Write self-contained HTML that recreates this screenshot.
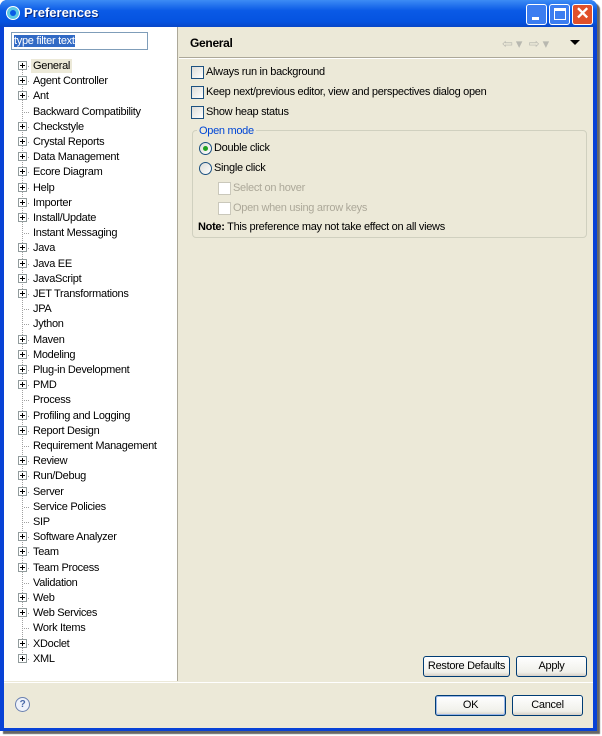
<!DOCTYPE html>
<html><head><style>
*{box-sizing:border-box;margin:0;padding:0}
body{width:602px;height:736px;background:#fff;font-family:"Liberation Sans",sans-serif;font-size:11px;letter-spacing:-0.3px;position:relative;overflow:hidden}
.win{position:absolute;left:0;top:0;width:597px;height:731px;background:#0842d6;border-radius:7px 7px 0 0;box-shadow:3px 3px 1px #666}
.title{position:absolute;left:0;top:0;width:597px;height:27px;border-radius:7px 7px 0 0;background:linear-gradient(#3d8cf5,#0a5ae6 40%,#0553e0 80%,#0847c8)}
.title span{position:absolute;left:24px;top:5px;color:#fff;font-weight:bold;font-size:13px;letter-spacing:0;text-shadow:1px 1px #0a2a80}
.ico{position:absolute;left:6px;top:6px;width:14px;height:14px;border-radius:50%;background:#5bc7e6;border:1px solid #fff}
.ico:after{content:"";position:absolute;left:3px;top:3px;width:6px;height:6px;border-radius:50%;background:#0a5ae6}
.tb{position:absolute;top:4px;width:21px;height:21px;border:1px solid #fff;border-radius:3px}
.client{position:absolute;left:4px;top:27px;width:589px;height:701px;background:#ece9d8}
.left{position:absolute;left:0;top:0;width:174px;height:654px;background:#fff;border-right:1px solid #aca899}
.filter{position:absolute;left:7px;top:5px;width:137px;height:18px;border:1px solid #7f9db9;background:#fff;padding:2px}
.filter span{background:#316ac5;color:#fff;font-size:11px;line-height:12px;display:inline-block}
.item{position:absolute;left:29px;height:14px;line-height:14px;white-space:nowrap;color:#000}
.ex{position:absolute;left:14px;width:9px;height:9px;border:1px solid #919b9c;background:#fff}
.ex:before{content:"";position:absolute;left:1px;top:3px;width:5px;height:1px;background:#000}
.ex:after{content:"";position:absolute;left:3px;top:1px;width:1px;height:5px;background:#000}
.dl{position:absolute;left:18px;border-left:1px dotted #a0a0a0}
.hl{position:absolute;left:24px;width:5px;border-top:1px dotted #a0a0a0}
.hdr{position:absolute;left:190px;top:36px;font-weight:bold;font-size:12px}
.cb{position:absolute;width:13px;height:13px;border:1px solid #1c5180;background:linear-gradient(135deg,#dcdcd7,#fff)}
.cb.d{border-color:#cac8bb;background:#fff}
.t{position:absolute;white-space:nowrap}
.rb{position:absolute;width:13px;height:13px;border-radius:50%;border:1px solid #1c5180;background:linear-gradient(135deg,#dcdcd7,#fff)}
.btn{position:absolute;height:21px;border:1px solid #003c74;border-radius:3px;background:linear-gradient(#fff,#f0f0ea 80%,#d6d0c5);text-align:center;line-height:19px;font-size:11px}
</style></head><body>
<div class="win">
<div class="title"><div class="ico"></div><span>Preferences</span>
<div class="tb" style="left:526px;background:#3c7df0"><div style="position:absolute;left:5px;top:12px;width:7px;height:3px;background:#fff"></div></div>
<div class="tb" style="left:549px;background:#3c7df0"><div style="position:absolute;left:4px;top:3px;width:12px;height:12px;border:1px solid #fff;border-top-width:3px"></div></div>
<div class="tb" style="left:572px;background:#e0502a;color:#fff;font-size:17px;line-height:18px;text-align:center;font-weight:bold">✕</div>
</div>
<div class="client">
<div class="left">
<div class="filter"><span>type filter text</span></div>
<div class="dl" style="top:42px;height:590px"></div>
</div>
<div style="position:absolute;left:175px;top:30px;width:414px;height:1px;background:#aca899"></div>
<div style="position:absolute;left:175px;top:31px;width:414px;height:1px;background:#fff"></div>
<div style="position:absolute;left:498px;top:9px;color:#b8b8b0;font-size:13px">⇦ ▾ &nbsp;⇨ ▾</div>
<div style="position:absolute;left:566px;top:13px;width:0;height:0;border-left:5px solid transparent;border-right:5px solid transparent;border-top:5px solid #000"></div>
<div style="position:absolute;left:0;top:655px;width:589px;height:1px;background:#fff"></div>
</div>
</div>
<div class="hdr">General</div>

<div class="cb" style="left:191px;top:66px"></div><div class="t" style="left:206px;top:66px">Always run in background</div>
<div class="cb" style="left:191px;top:86px"></div><div class="t" style="left:206px;top:86px">Keep next/previous editor, view and perspectives dialog open</div>
<div class="cb" style="left:191px;top:106px"></div><div class="t" style="left:206px;top:106px">Show heap status</div>
<div style="position:absolute;left:192px;top:130px;width:395px;height:108px;border:1px solid #d0d0bf;border-radius:4px"></div>
<div class="t" style="left:197px;top:125px;background:#ece9d8;color:#0046d5;padding:0 2px">Open mode</div>
<div class="rb" style="left:199px;top:142px"><div style="position:absolute;left:3px;top:3px;width:5px;height:5px;border-radius:50%;background:#21a121"></div></div>
<div class="t" style="left:214px;top:142px">Double click</div>
<div class="rb" style="left:199px;top:162px"></div><div class="t" style="left:214px;top:162px">Single click</div>
<div class="cb d" style="left:218px;top:182px"></div><div class="t" style="left:233px;top:182px;color:#aca899">Select on hover</div>
<div class="cb d" style="left:218px;top:202px"></div><div class="t" style="left:233px;top:202px;color:#aca899">Open when using arrow keys</div>
<div class="t" style="left:198px;top:221px"><b>Note:</b> This preference may not take effect on all views</div>

<div class="btn" style="left:423px;top:656px;width:87px">Restore Defaults</div>
<div class="btn" style="left:516px;top:656px;width:71px">Apply</div>
<div class="btn" style="left:435px;top:695px;width:71px;box-shadow:inset 0 0 0 1px #9ab7e8">OK</div>
<div class="btn" style="left:512px;top:695px;width:71px">Cancel</div>
<div style="position:absolute;left:15px;top:697px;width:15px;height:15px;border-radius:50%;border:1px solid #6a80b0;color:#4a6aa8;font-size:10px;text-align:center;line-height:13px;font-weight:bold;background:#eef2fa">?</div>

<div id="tree"></div>
<script>
var items=[["General",1],["Agent Controller",1],["Ant",1],["Backward Compatibility",0],["Checkstyle",1],["Crystal Reports",1],["Data Management",1],["Ecore Diagram",1],["Help",1],["Importer",1],["Install/Update",1],["Instant Messaging",0],["Java",1],["Java EE",1],["JavaScript",1],["JET Transformations",1],["JPA",0],["Jython",0],["Maven",1],["Modeling",1],["Plug-in Development",1],["PMD",1],["Process",0],["Profiling and Logging",1],["Report Design",1],["Requirement Management",0],["Review",1],["Run/Debug",1],["Server",1],["Service Policies",0],["SIP",0],["Software Analyzer",1],["Team",1],["Team Process",1],["Validation",0],["Web",1],["Web Services",1],["Work Items",0],["XDoclet",1],["XML",1]];
var h="";
items.forEach(function(it,i){var y=59+i*15.2;
h+='<div class="hl" style="top:'+(y+7)+'px"></div>';
if(it[1])h+='<div class="ex" style="left:18px;top:'+(y+2)+'px"></div>';
h+='<div class="item" style="left:31px;top:'+y+'px;'+(i==0?'background:#ece9d8;':'')+'padding:0 2px;">'+it[0]+'</div>';});
document.getElementById("tree").innerHTML=h;
</script>
</body></html>
